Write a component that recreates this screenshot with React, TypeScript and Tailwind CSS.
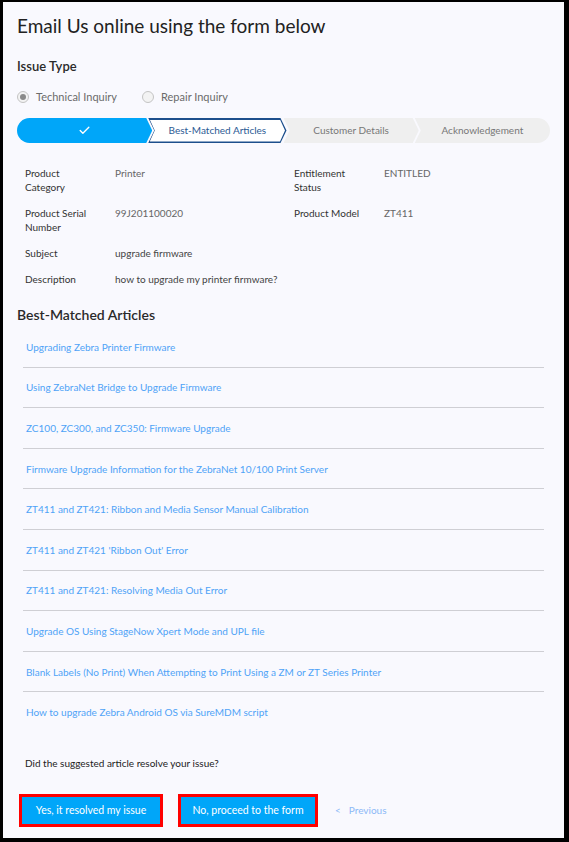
import { Check } from "lucide-react";

const details = [
    { label: "Product Category", value: "Printer", label2: "Entitlement Status", value2: "ENTITLED" },
    { label: "Product Serial Number", value: "99J201100020", label2: "Product Model", value2: "ZT411" },
    { label: "Subject", value: "upgrade firmware" },
    { label: "Description", value: "how to upgrade my printer firmware?" },
];

const articles = [
    "Upgrading Zebra Printer Firmware",
    "Using ZebraNet Bridge to Upgrade Firmware",
    "ZC100, ZC300, and ZC350: Firmware Upgrade",
    "Firmware Upgrade Information for the ZebraNet 10/100 Print Server",
    "ZT411 and ZT421: Ribbon and Media Sensor Manual Calibration",
    "ZT411 and ZT421 'Ribbon Out' Error",
    "ZT411 and ZT421: Resolving Media Out Error",
    "Upgrade OS Using StageNow Xpert Mode and UPL file",
    "Blank Labels (No Print) When Attempting to Print Using a ZM or ZT Series Printer",
    "How to upgrade Zebra Android OS via SureMDM script",
];

function Radio({ checked, label }: { checked?: boolean; label: string }) {
    return (
        <label className="flex items-center gap-[7px]">
            <span className="flex size-[12px] items-center justify-center rounded-full border border-[#c4c4c4] bg-[#f3f3f3]">
                {checked && <span className="size-[6px] rounded-full bg-[#8a8a8a]" />}
            </span>
            <span className="text-[11px] text-[#6b6b6b]">{label}</span>
        </label>
    );
}

function Stepper() {
    return (
        <div className="flex h-[25px] text-[10px]">
            <div className="flex flex-1 items-center justify-center rounded-l-full bg-[#00a6f9] [clip-path:polygon(0_0,calc(100%-6px)_0,100%_50%,calc(100%-6px)_100%,0_100%)]">
                <Check className="size-[13px] text-white" strokeWidth={2.5} />
            </div>
            <div className="-ml-[4px] flex-1 bg-[#1d4f8c] p-[1.5px] [clip-path:polygon(0_0,calc(100%-6px)_0,100%_50%,calc(100%-6px)_100%,0_100%,6px_50%)]">
                <div className="flex h-full items-center justify-center bg-white text-[#2c5a94] [clip-path:polygon(0_0,calc(100%-5px)_0,100%_50%,calc(100%-5px)_100%,0_100%,5px_50%)]">
                    Best-Matched Articles
                </div>
            </div>
            <div className="-ml-[3px] flex flex-1 items-center justify-center bg-[#efefef] text-[#777] [clip-path:polygon(0_0,calc(100%-6px)_0,100%_50%,calc(100%-6px)_100%,0_100%,6px_50%)]">
                Customer Details
            </div>
            <div className="-ml-[4px] flex flex-1 items-center justify-center rounded-r-full bg-[#efefef] text-[#777] [clip-path:polygon(0_0,100%_0,100%_100%,0_100%,6px_50%)]">
                Acknowledgement
            </div>
        </div>
    );
}

export default function App() {
    return (
        <div className="h-[842px] w-[569px] border-t-[2px] border-r-[5px] border-b-[4px] border-l-[3px] border-black bg-[#f9f9fe] px-[14px] pt-[10px] font-['Lato','Liberation_Sans',sans-serif] text-[#2b2b2b]">
            <h1 className="text-[19px] leading-[28px] text-[#222]">Email Us online using the form below</h1>

            <h2 className="mt-[17px] text-[13px] leading-[18px] font-semibold text-[#2a2a2a]">Issue Type</h2>
            <div className="mt-[15px] flex h-[14px] items-center gap-[25px]">
                <Radio checked label="Technical Inquiry" />
                <Radio label="Repair Inquiry" />
            </div>

            <div className="mt-[14px]">
                <Stepper />
            </div>

            <div className="mt-[23px] grid grid-cols-[90px_179px_90px_1fr] gap-y-[12px] pl-[8px] text-[10px] leading-[14px]">
                {details.map((d) => (
                    <div key={d.label} className="contents">
                        <div className="pr-[20px] text-[#333]">{d.label}</div>
                        <div className={d.label2 ? "text-[#666]" : "col-span-3 text-[#444]"}>{d.value}</div>
                        {d.label2 && (
                            <>
                                <div className="pr-[20px] text-[#333]">{d.label2}</div>
                                <div className="text-[#666]">{d.value2}</div>
                            </>
                        )}
                    </div>
                ))}
            </div>

            <h2 className="mt-[19px] text-[14px] leading-[20px] font-semibold text-[#2a2a2a]">Best-Matched Articles</h2>
            <ul className="mt-[2px] mr-[6px] ml-[6px]">
                {articles.map((a, i) => (
                    <li
                        key={a}
                        className={
                            "py-[12.8px] pl-[3px] text-[10px] leading-[14px] text-[#4fa3f7] " +
                            (i < articles.length - 1 ? "border-b border-[#cfcfd4]" : "")
                        }
                    >
                        {a}
                    </li>
                ))}
            </ul>

            <p className="mt-[24px] pl-[8px] text-[10px] leading-[14px] text-[#222]">
                Did the suggested article resolve your issue?
            </p>

            <div className="mt-[24px] ml-[2px] flex items-center">
                <button className="h-[33px] w-[144px] border-[3px] border-[#ff0000] bg-[#00a6f9] text-[10.5px] text-white">
                    Yes, it resolved my issue
                </button>
                <button className="ml-[15px] h-[33px] w-[140px] border-[3px] border-[#ff0000] bg-[#00a6f9] text-[10.5px] text-white">
                    No, proceed to the form
                </button>
                <span className="ml-[17px] text-[10px] text-[#8bb8f7]">
                    &lt;<span className="ml-[8px]">Previous</span>
                </span>
            </div>
        </div>
    );
}
